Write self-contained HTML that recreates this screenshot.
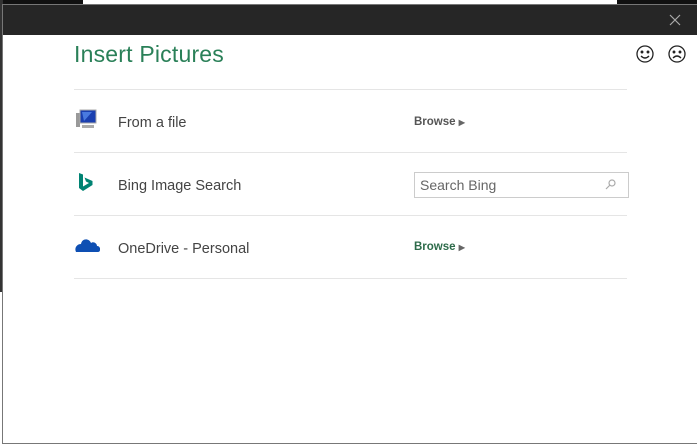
<html><head><style>
body{margin:0;width:697px;height:446px;position:relative;overflow:hidden;background:#fff;font-family:"Liberation Sans",sans-serif}
.a{position:absolute}
.t{color:#444;font-size:14.5px}
.b{font-size:11.5px;font-weight:bold;color:#555}
</style></head><body>
<div class="a" style="left:0;top:0;width:83px;height:5px;background:#111"></div>
<div class="a" style="left:617px;top:0;width:80px;height:5px;background:#111"></div>
<div class="a" style="left:0;top:0;width:3px;height:292px;background:#333"></div>
<div class="a" style="left:2px;top:4px;width:694px;height:438px;border:1px solid #777;background:#fff"></div>
<div class="a" style="left:3px;top:5px;width:694px;height:30px;background:#262626"></div>
<svg class="a" style="left:669px;top:14px" width="12" height="12"><path d="M1 1L11 11M11 1L1 11" stroke="#aaa" stroke-width="1.2"/></svg>
<div class="a" style="left:74px;top:41px;font-size:23px;color:#2a8058;letter-spacing:0.2px">Insert Pictures</div>
<svg class="a" style="left:635px;top:44px" width="20" height="20" fill="none" stroke="#222" stroke-width="1.3"><circle cx="10" cy="10" r="8"/><circle cx="7" cy="8" r="0.8" fill="#222"/><circle cx="13" cy="8" r="0.8" fill="#222"/><path d="M6 12q4 4 8 0"/></svg>
<svg class="a" style="left:667px;top:44px" width="20" height="20" fill="none" stroke="#222" stroke-width="1.3"><circle cx="10" cy="10" r="8"/><circle cx="7" cy="8" r="0.8" fill="#222"/><circle cx="13" cy="8" r="0.8" fill="#222"/><path d="M6 14q4 -4 8 0"/></svg>
<div class="a" style="left:74px;top:89px;width:553px;height:1px;background:#e5e5e5"></div>
<div class="a" style="left:74px;top:152px;width:553px;height:1px;background:#e5e5e5"></div>
<div class="a" style="left:74px;top:215px;width:553px;height:1px;background:#e5e5e5"></div>
<div class="a" style="left:74px;top:278px;width:553px;height:1px;background:#e5e5e5"></div>
<svg class="a" style="left:74px;top:108px" width="26" height="24"><rect x="2" y="5" width="4" height="14" fill="#999"/><rect x="6" y="2" width="16" height="13" fill="#1a3fb0" stroke="#aaa"/><path d="M8 4l10 0-8 9z" fill="#4a7ae0"/><rect x="8" y="17" width="12" height="3" fill="#aaa"/></svg>
<div class="a t" style="left:118px;top:115px">From a file</div>
<div class="a b" style="left:414px;top:116px">Browse <span style="font-size:8px;color:#666">▶</span></div>
<svg class="a" style="left:78px;top:172px" width="16" height="22"><path d="M1 1l4 1.5v12l6-3.5-3-1.5-1.5-4 8 3.5v4l-9.5 6-4-3z" fill="#008373"/></svg>
<div class="a t" style="left:118px;top:178px">Bing Image Search</div>
<div class="a" style="left:414px;top:172px;width:213px;height:24px;border:1px solid #ccc"></div>
<div class="a" style="left:420px;top:177px;font-size:14px;color:#666">Search Bing</div>
<svg class="a" style="left:605px;top:179px" width="11" height="11" fill="none" stroke="#aaa" stroke-width="1.2"><circle cx="7" cy="4" r="3"/><path d="M5 6L1 10"/></svg>
<svg class="a" style="left:74px;top:237px" width="26" height="16"><path d="M2 15h22c3 0 3-6-1-6 0-3-4-5-6-3-2-5-9-5-10 1-4 0-7 4-5 8z" fill="#0e4fb3"/></svg>
<div class="a t" style="left:118px;top:241px">OneDrive - Personal</div>
<div class="a b" style="left:414px;top:241px;color:#2d6b4a">Browse <span style="font-size:8px;color:#666">▶</span></div>
</body></html>
